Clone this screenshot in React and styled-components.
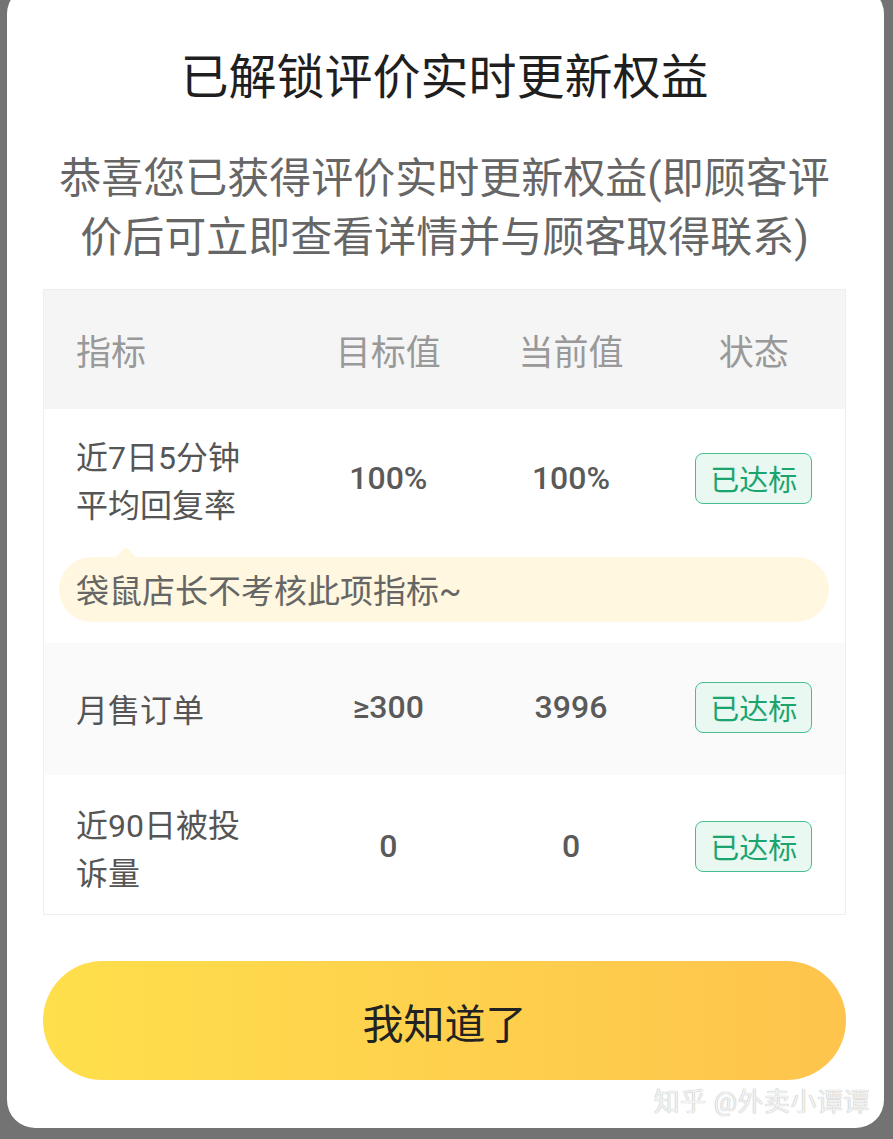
import React from "react";
import styled, { createGlobalStyle } from "styled-components";

const GlobalStyle = createGlobalStyle`
  html, body {
    margin: 0;
    padding: 0;
    background: #737373;
  }
  body {
    font-family: Roboto, "Noto Sans CJK SC", "Noto Sans", sans-serif;
  }
  * {
    box-sizing: border-box;
  }
`;

const Backdrop = styled.div`
  min-height: 1139px;
  padding: 0 9px 11px 7px;
  overflow: hidden;
  background: #737373;
`;

const Modal = styled.div`
  position: relative;
  margin-top: -14px;
  background: #fff;
  border-radius: 28px;
  padding: 64px 38px 48px 36px;
  display: flex;
  flex-direction: column;
`;

const Title = styled.h1`
  margin: 0;
  font-size: 48px;
  line-height: 56px;
  font-weight: 400;
  color: #1f1f1f;
  text-align: center;
`;

const Subtitle = styled.p`
  margin: 43px 0 0;
  font-size: 42px;
  line-height: 59px;
  color: #666;
  text-align: center;
`;

const Table = styled.div`
  margin-top: 22px;
  border: 1px solid #eeeeee;
  display: flex;
  flex-direction: column;
`;

const Grid = styled.div`
  display: grid;
  grid-template-columns: 253px repeat(3, 1fr);
  align-items: center;
`;

const HeaderRow = styled(Grid)`
  background: #f5f5f5;
  padding: 40px 0 31px;
  font-size: 35px;
  line-height: 48px;
  color: #999;
`;

const Row = styled.div`
  background: ${(p) => (p.$shaded ? "#fafafa" : "#fff")};
  padding: ${(p) => p.$pad};
`;

const Cell = styled.div`
  padding-left: ${(p) => (p.$left ? "32px" : "0")};
  margin-top: ${(p) => (p.$raise ? "-8px" : "0")};
  display: flex;
  justify-content: ${(p) => (p.$left ? "flex-start" : "center")};
`;

const Label = styled.div`
  font-size: 32px;
  line-height: 48px;
  color: #555;
`;

const Value = styled.div`
  font-size: 32px;
  line-height: 48px;
  font-weight: 500;
  color: #5a5a5a;
`;

const Badge = styled.span`
  display: inline-flex;
  align-items: center;
  justify-content: center;
  width: 117px;
  height: 51px;
  border: 1.5px solid #45bf90;
  border-radius: 8px;
  background: #e9f9f2;
  color: #1ca46e;
  font-size: 29px;
`;

const Tip = styled.div`
  position: relative;
  margin: 27px 16px 21px 15px;
  height: 65px;
  border-radius: 33px;
  background: #fff7e0;
  padding-left: 17px;
  font-size: 33px;
  line-height: 70px;
  color: #666;

  &::before {
    content: "";
    position: absolute;
    left: 57px;
    top: -10px;
    border-left: 10px solid transparent;
    border-right: 10px solid transparent;
    border-bottom: 10px solid #fff7e0;
  }
`;

const ConfirmButton = styled.button`
  margin-top: 46px;
  height: 119px;
  border: none;
  border-radius: 60px;
  background: linear-gradient(90deg, #ffdf4b 0%, #fed24d 45%, #fec44c 100%);
  font-family: inherit;
  font-size: 41px;
  color: #222;
  cursor: pointer;
`;

const Watermark = styled.div`
  position: absolute;
  right: 14px;
  bottom: 11px;
  font-size: 26px;
  line-height: 30px;
  color: #f2f2f2;
  text-shadow: 0 0 1px #9a9a9a;
  letter-spacing: 0.5px;
`;

const rows = [
  {
    name: ["近7日5分钟", "平均回复率"],
    target: "100%",
    current: "100%",
    tip: "袋鼠店长不考核此项指标~",
    pad: "25px 0 0",
  },
  { name: ["月售订单"], target: "≥300", current: "3996", shaded: true, pad: "44px 0 40px" },
  { name: ["近90日被投", "诉量"], target: "0", current: "0", pad: "27px 0 16px" },
];

export default function App() {
  return (
    <>
      <GlobalStyle />
      <Backdrop>
        <Modal>
          <Title>已解锁评价实时更新权益</Title>
          <Subtitle>
            恭喜您已获得评价实时更新权益(即顾客评价后可立即查看详情并与顾客取得联系)
          </Subtitle>
          <Table>
            <HeaderRow>
              <Cell $left>指标</Cell>
              <Cell>目标值</Cell>
              <Cell>当前值</Cell>
              <Cell>状态</Cell>
            </HeaderRow>
            {rows.map((r) => (
              <Row key={r.name.join("")} $shaded={r.shaded} $pad={r.pad}>
                <Grid>
                  <Cell $left>
                    <Label>
                      {r.name.map((line) => (
                        <div key={line}>{line}</div>
                      ))}
                    </Label>
                  </Cell>
                  <Cell $raise>
                    <Value>{r.target}</Value>
                  </Cell>
                  <Cell $raise>
                    <Value>{r.current}</Value>
                  </Cell>
                  <Cell $raise>
                    <Badge>已达标</Badge>
                  </Cell>
                </Grid>
                {r.tip && <Tip>{r.tip}</Tip>}
              </Row>
            ))}
          </Table>
          <ConfirmButton>我知道了</ConfirmButton>
          <Watermark>知乎 @外卖小谭谭</Watermark>
        </Modal>
      </Backdrop>
    </>
  );
}
